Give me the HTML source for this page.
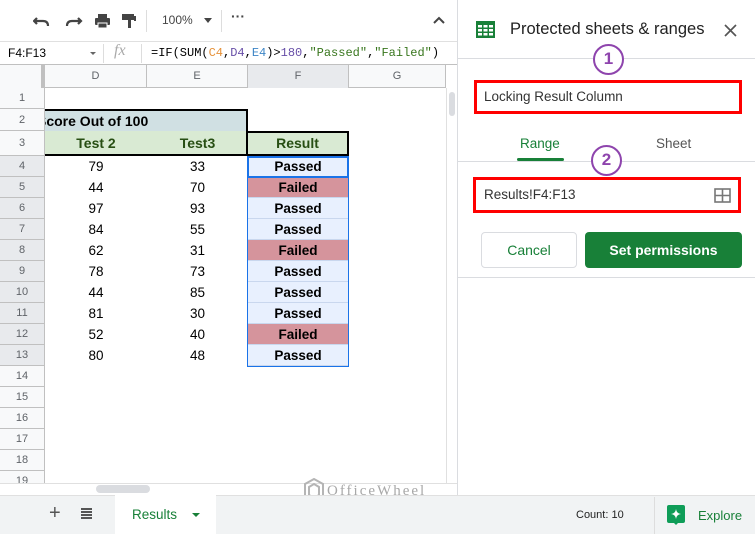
<!DOCTYPE html>
<html><head><meta charset="utf-8"><style>
*{margin:0;padding:0;box-sizing:border-box}
body{width:755px;height:534px;overflow:hidden;background:#fff;font-family:"Liberation Sans",Arial,sans-serif;position:relative}
.a{position:absolute}
.rh{position:absolute;left:0;width:45px;background:#f8f9fa;border-bottom:1px solid #c0c0c0;border-right:1px solid #c0c0c0;color:#5f6368;font-size:11px;text-align:center}
.c{position:absolute;text-align:center;font-size:13.5px;color:#000}
.res{position:absolute;left:248px;width:100px;height:21px;line-height:21px;text-align:center;font-size:13.5px;font-weight:bold;color:#000;background:#e8f0fe;border-bottom:1px solid #c9d7ee}
.f{background:#d5949c}
</style></head><body>
<!-- toolbar -->
<div class="a" style="left:0;top:0;width:458px;height:42px;background:#fff;border-bottom:1px solid #e0e0e0"></div>
<svg class="a" style="left:33px;top:12px" width="120" height="18" viewBox="0 0 120 18">
<path d="M4 6 L1 9 L4 12 M1.5 9 H10 Q15 9 15 14" fill="none" stroke="#444" stroke-width="2.2"/>
<path d="M45 6 L48 9 L45 12 M47.5 9 H39 Q34 9 34 14" fill="none" stroke="#444" stroke-width="2.2"/>
<rect x="62" y="6" width="15" height="7" rx="1" fill="#444"/><rect x="65" y="2" width="9" height="4" fill="#444"/><rect x="65" y="11" width="9" height="5" fill="#444" stroke="#fff" stroke-width="1"/>
<rect x="89" y="2" width="12" height="6" fill="#444"/><rect x="101" y="4" width="2" height="5" fill="#444"/><rect x="95" y="8" width="3" height="8" fill="#444"/>
</svg>
<div class="a" style="left:146px;top:10px;width:1px;height:22px;background:#ddd"></div>
<div class="a" style="left:162px;top:13px;font-size:12px;color:#444">100%</div>
<div class="a" style="left:204px;top:18px;width:0;height:0;border-left:4px solid transparent;border-right:4px solid transparent;border-top:5px solid #444"></div>
<div class="a" style="left:221px;top:10px;width:1px;height:22px;background:#ddd"></div>
<div class="a" style="left:231px;top:8px;font-size:14px;color:#444;font-weight:bold">···</div>
<svg class="a" style="left:432px;top:15px" width="14" height="10"><path d="M2 8 L7 3 L12 8" fill="none" stroke="#444" stroke-width="2"/></svg>
<!-- formula bar -->
<div class="a" style="left:0;top:42px;width:458px;height:23px;border-bottom:1px solid #c0c0c0;background:#fff"></div>
<div class="a" style="left:8px;top:46px;font-size:12px;color:#000">F4:F13</div>
<div class="a" style="left:90px;top:52px;border-left:3px solid transparent;border-right:3px solid transparent;border-top:3px solid #666"></div>
<div class="a" style="left:103px;top:44px;width:1px;height:19px;background:#ddd"></div>
<div class="a" style="left:114px;top:42px;font-family:'Liberation Serif',serif;font-style:italic;font-size:16px;color:#aaa">fx</div>
<div class="a" style="left:141px;top:44px;width:1px;height:19px;background:#ddd"></div>
<div class="a" style="left:151px;top:46px;font-family:'Liberation Mono',monospace;font-size:12px;color:#000;white-space:pre">=IF(SUM(<span style="color:#e69138">C4</span>,<span style="color:#674ea7">D4</span>,<span style="color:#3d85c6">E4</span>)&gt;<span style="color:#674ea7">180</span>,<span style="color:#38761d">"Passed"</span>,<span style="color:#38761d">"Failed"</span>)</div>
<!-- column headers -->
<div class="a" style="left:0;top:65px;width:446px;height:23px;background:#f8f9fa;border-bottom:1px solid #c0c0c0"></div>
<div class="a" style="left:0;top:65px;width:45px;height:23px;border-right:4px solid #c0c0c0;background:#f8f9fa"></div>
<div class="a" style="left:45px;top:65px;width:102px;height:23px;line-height:23px;text-align:center;font-size:11px;color:#5f6368;border-right:1px solid #c0c0c0">D</div>
<div class="a" style="left:147px;top:65px;width:101px;height:23px;line-height:23px;text-align:center;font-size:11px;color:#5f6368;border-right:1px solid #c0c0c0">E</div>
<div class="a" style="left:248px;top:65px;width:101px;height:23px;line-height:23px;text-align:center;font-size:11px;color:#5f6368;background:#e8eaed;border-right:1px solid #c0c0c0">F</div>
<div class="a" style="left:349px;top:65px;width:97px;height:23px;line-height:23px;text-align:center;font-size:11px;color:#5f6368;border-right:1px solid #c0c0c0">G</div>
<!-- header blocks -->
<div class="a" style="left:45px;top:109px;width:203px;height:22px;background:#d0e0e3;border:2px solid #000;border-left:none;border-bottom:none;font-weight:bold;font-size:14px;line-height:21px;overflow:hidden;white-space:nowrap"><span style="margin-left:-8px">Score Out of 100</span></div>
<!-- row headers -->
<div class="rh" style="top:88px;height:21px;line-height:21px">1</div>
<div class="rh" style="top:109px;height:22px;line-height:22px">2</div>
<div class="rh" style="top:131px;height:25px;line-height:25px">3</div>
<div class="rh" style="top:156px;height:21px;line-height:21px;background:#e8eaed">4</div>
<div class="rh" style="top:177px;height:21px;line-height:21px;background:#e8eaed">5</div>
<div class="rh" style="top:198px;height:21px;line-height:21px;background:#e8eaed">6</div>
<div class="rh" style="top:219px;height:21px;line-height:21px;background:#e8eaed">7</div>
<div class="rh" style="top:240px;height:21px;line-height:21px;background:#e8eaed">8</div>
<div class="rh" style="top:261px;height:21px;line-height:21px;background:#e8eaed">9</div>
<div class="rh" style="top:282px;height:21px;line-height:21px;background:#e8eaed">10</div>
<div class="rh" style="top:303px;height:21px;line-height:21px;background:#e8eaed">11</div>
<div class="rh" style="top:324px;height:21px;line-height:21px;background:#e8eaed">12</div>
<div class="rh" style="top:345px;height:21px;line-height:21px;background:#e8eaed">13</div>
<div class="rh" style="top:366px;height:21px;line-height:21px">14</div>
<div class="rh" style="top:387px;height:21px;line-height:21px">15</div>
<div class="rh" style="top:408px;height:21px;line-height:21px">16</div>
<div class="rh" style="top:429px;height:21px;line-height:21px">17</div>
<div class="rh" style="top:450px;height:21px;line-height:21px">18</div>
<div class="rh" style="top:471px;height:13px;line-height:21px;overflow:hidden">19</div>
<div class="a" style="left:45px;top:131px;width:203px;height:25px;background:#d9ead3;border-right:2px solid #000;border-bottom:2px solid #000"></div>
<div class="c" style="left:45px;top:135px;width:102px;font-weight:bold;color:#274e13;font-size:14px">Test 2</div>
<div class="c" style="left:147px;top:135px;width:101px;font-weight:bold;color:#274e13;font-size:14px">Test3</div>
<div class="a" style="left:246px;top:131px;width:103px;height:25px;background:#d9ead3;border:2px solid #000;text-align:center;line-height:21px;font-weight:bold;color:#274e13;font-size:14px">Result</div>
<!-- data -->
<div class="a" style="left:45px;top:156px;width:203px;font-size:13.5px;line-height:21px">
<div style="display:flex"><span style="width:102px;text-align:center">79</span><span style="width:101px;text-align:center">33</span></div>
<div style="display:flex"><span style="width:102px;text-align:center">44</span><span style="width:101px;text-align:center">70</span></div>
<div style="display:flex"><span style="width:102px;text-align:center">97</span><span style="width:101px;text-align:center">93</span></div>
<div style="display:flex"><span style="width:102px;text-align:center">84</span><span style="width:101px;text-align:center">55</span></div>
<div style="display:flex"><span style="width:102px;text-align:center">62</span><span style="width:101px;text-align:center">31</span></div>
<div style="display:flex"><span style="width:102px;text-align:center">78</span><span style="width:101px;text-align:center">73</span></div>
<div style="display:flex"><span style="width:102px;text-align:center">44</span><span style="width:101px;text-align:center">85</span></div>
<div style="display:flex"><span style="width:102px;text-align:center">81</span><span style="width:101px;text-align:center">30</span></div>
<div style="display:flex"><span style="width:102px;text-align:center">52</span><span style="width:101px;text-align:center">40</span></div>
<div style="display:flex"><span style="width:102px;text-align:center">80</span><span style="width:101px;text-align:center">48</span></div>
</div>
<div class="res" style="top:156px">Passed</div>
<div class="res f" style="top:177px">Failed</div>
<div class="res" style="top:198px">Passed</div>
<div class="res" style="top:219px">Passed</div>
<div class="res f" style="top:240px">Failed</div>
<div class="res" style="top:261px">Passed</div>
<div class="res" style="top:282px">Passed</div>
<div class="res" style="top:303px">Passed</div>
<div class="res f" style="top:324px">Failed</div>
<div class="res" style="top:345px">Passed</div>
<div class="a" style="left:247px;top:156px;width:102px;height:211px;border:1px solid #1a73e8"></div>
<div class="a" style="left:247px;top:156px;width:102px;height:22px;border:2px solid #1a73e8"></div>
<!-- scrollbars -->
<div class="a" style="left:446px;top:88px;width:12px;height:396px;background:#fff;border-left:1px solid #e0e0e0"></div>
<div class="a" style="left:449px;top:92px;width:6px;height:24px;background:#dadce0;border-radius:3px"></div>
<div class="a" style="left:0;top:483px;width:458px;height:12px;background:#fff;border-top:1px solid #e0e0e0"></div>
<div class="a" style="left:96px;top:485px;width:54px;height:8px;background:#dadce0;border-radius:4px"></div>
<!-- watermark -->
<svg class="a" style="left:304px;top:478px" width="20" height="26"><path d="M10 1 L19 6 V20 L10 25 L1 20 V6 Z M10 6 L15 9 V17 L10 20 L5 17 V9Z" fill="none" stroke="#b5b5b5" stroke-width="2"/></svg>
<div class="a" style="left:327px;top:483px;font-family:'Liberation Serif',serif;font-size:15px;letter-spacing:2px;color:#a8a8a8">OfficeWheel</div>
<!-- tab bar -->
<div class="a" style="left:0;top:495px;width:755px;height:39px;background:#f1f3f4;border-top:1px solid #e0e0e0"></div>
<div class="a" style="left:49px;top:502px;font-size:20px;color:#555">+</div>
<div class="a" style="left:81px;top:508px;width:11px;height:12px;background:repeating-linear-gradient(#555 0 2px,transparent 2px 3px)"></div>
<div class="a" style="left:115px;top:495px;width:101px;height:39px;background:#fff"></div>
<div class="a" style="left:132px;top:507px;font-size:13.5px;color:#188038">Results</div>
<div class="a" style="left:192px;top:513px;border-left:4px solid transparent;border-right:4px solid transparent;border-top:4px solid #188038"></div>
<div class="a" style="left:576px;top:509px;font-size:11px;color:#222">Count: 10</div>
<div class="a" style="left:654px;top:497px;width:1px;height:37px;background:#ddd"></div>
<div class="a" style="left:667px;top:505px;width:18px;height:18px;background:#0f9d58;border-radius:2px"></div>
<div class="a" style="left:672px;top:521px;border-left:4px solid transparent;border-right:4px solid transparent;border-top:4px solid #0f9d58"></div>
<svg class="a" style="left:670px;top:508px" width="12" height="12"><path d="M6 1 Q6.5 5.5 11 6 Q6.5 6.5 6 11 Q5.5 6.5 1 6 Q5.5 5.5 6 1Z" fill="#fff"/></svg>
<div class="a" style="left:698px;top:508px;font-size:13px;color:#188038">Explore</div>
<!-- panel -->
<div class="a" style="left:457px;top:0;width:298px;height:495px;background:#fff;border-left:1px solid #dadce0"></div>
<div class="a" style="left:458px;top:58px;width:297px;height:1px;background:#dadce0"></div>
<div class="a" style="left:458px;top:161px;width:297px;height:1px;background:#dadce0"></div>
<div class="a" style="left:458px;top:277px;width:297px;height:1px;background:#dadce0"></div>
<svg class="a" style="left:476px;top:21px" width="19" height="17"><rect width="19" height="17" fill="#188038"/><g fill="#fff"><rect x="2" y="4" width="4" height="2.5"/><rect x="7.5" y="4" width="4" height="2.5"/><rect x="13" y="4" width="4" height="2.5"/><rect x="2" y="8" width="4" height="2.5"/><rect x="7.5" y="8" width="4" height="2.5"/><rect x="13" y="8" width="4" height="2.5"/><rect x="2" y="12" width="4" height="2.5"/><rect x="7.5" y="12" width="4" height="2.5"/><rect x="13" y="12" width="4" height="2.5"/></g></svg>
<div class="a" style="left:510px;top:20px;font-size:16.5px;color:#222">Protected sheets &amp; ranges</div>
<svg class="a" style="left:724px;top:24px" width="13" height="13"><path d="M1 1L12 12M12 1L1 12" stroke="#555" stroke-width="1.7"/></svg>
<div class="a" style="left:593px;top:44px;width:31px;height:31px;border:2.5px solid #8e44ad;border-radius:50%;background:#fff;text-align:center;line-height:26px;font-size:17px;font-weight:bold;color:#8e44ad">1</div>
<div class="a" style="left:474px;top:80px;width:268px;height:34px;border:3px solid #f00;font-size:13.5px;color:#333;padding-left:7px;line-height:28px">Locking Result Column</div>
<div class="a" style="left:520px;top:136px;font-size:13.5px;color:#188038">Range</div>
<div class="a" style="left:517px;top:158px;width:47px;height:3px;background:#188038;border-radius:2px"></div>
<div class="a" style="left:656px;top:136px;font-size:13.5px;color:#555">Sheet</div>
<div class="a" style="left:591px;top:145px;width:31px;height:31px;border:2.5px solid #8e44ad;border-radius:50%;background:#fff;text-align:center;line-height:26px;font-size:17px;font-weight:bold;color:#8e44ad">2</div>
<div class="a" style="left:473px;top:177px;width:268px;height:36px;border:3px solid #f00;font-size:13.5px;color:#333;padding-left:8px;line-height:30px">Results!F4:F13</div>
<svg class="a" style="left:714px;top:188px" width="17" height="15"><rect x="1" y="1" width="15" height="13" fill="none" stroke="#777" stroke-width="1.6"/><path d="M8.5 1V14M1 7.5H16" stroke="#777" stroke-width="1.6"/></svg>
<div class="a" style="left:481px;top:232px;width:96px;height:36px;border:1px solid #dadce0;border-radius:4px;text-align:center;line-height:34px;font-size:14px;color:#188038">Cancel</div>
<div class="a" style="left:585px;top:232px;width:157px;height:36px;background:#188038;border-radius:4px;text-align:center;line-height:36px;font-size:14px;font-weight:bold;color:#fff">Set permissions</div>
</body></html>
